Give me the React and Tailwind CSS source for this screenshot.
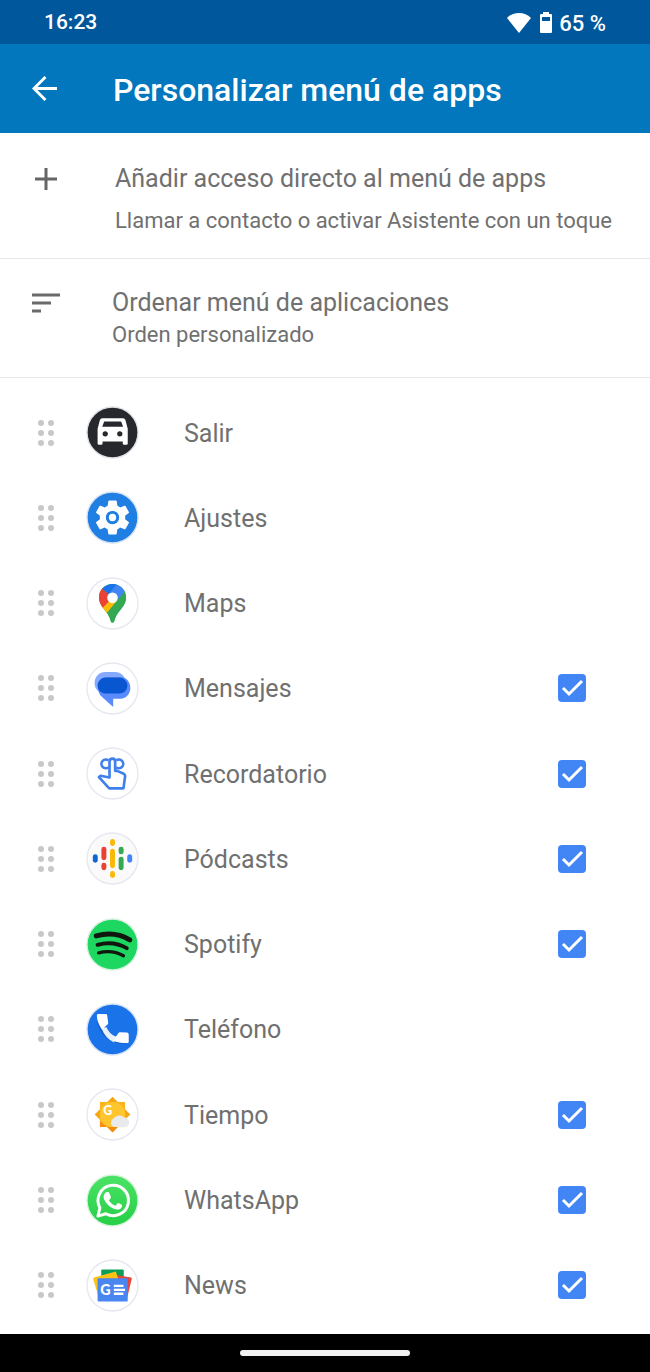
import { useState } from 'react';
import { MdSettings } from 'react-icons/md';

// Every app icon is drawn in a 160x160 box centred on 0,0
const IconCircle = ({ fill = '#ffffff', border = '#e6e7f0', children }) => (
  <svg viewBox="-80 -80 160 160" className="h-[53px] w-[53px] shrink-0" aria-hidden="true">
    <circle r="77" fill={fill} stroke={border} strokeWidth="4" />
    {children}
  </svg>
);

const ExitIcon = () => (
  <IconCircle fill="#26282d" border="#dfe1e6">
    <path
      fill="#fff"
      fillRule="evenodd"
      d="M-31 -43H32Q37 -43 39 -38L46 -11V33Q46 37 42 37H35Q31 37 31 33V27H-30V33Q-30 37 -34 37H-41Q-45 37 -45 33V-11L-38 -38Q-36 -43 -31 -43ZM-25 -33L-31 -17H32L26 -33Z"
    />
    <circle cx="-22" cy="4" r="8" fill="#26282d" />
    <circle cx="22" cy="4" r="8" fill="#26282d" />
  </IconCircle>
);

const SettingsIcon = () => (
  <IconCircle fill="#1f7fe3" border="#d5e2f3">
    <MdSettings x="-64" y="-64" size={128} color="#fff" />
    <circle r="20" fill="#1f7fe3" />
    <circle r="11" fill="#fff" />
  </IconCircle>
);

const MapsIcon = () => (
  <IconCircle>
    <clipPath id="pin">
      <path d="M0 -59C24 -59 41 -40 41 -18C41 8 18 20 9 42C5 52 5 58 0 58C-5 58 -5 52 -9 42C-18 20 -41 8 -41 -18C-41 -40 -24 -59 0 -59Z" />
    </clipPath>
    <g clipPath="url(#pin)">
      <rect x="-45" y="-62" width="90" height="125" fill="#34a853" />
      <path d="M-45 20L0 -17L15 -4L-24 43L-45 43Z" fill="#fbbc04" />
      <path d="M-45 -60L-31 -46L0 -18L-36 20L-45 20Z" fill="#ea4335" />
      <path d="M-32 -45L-32 -62H12L14 -56L-10 -28Z" fill="#1a73e8" />
      <path d="M13 -57L45 -62V-42L8 -3L-13 -27Z" fill="#4285f4" />
      <path d="M37 -36L-20 32L-10 62H45V-36Z" fill="#34a853" />
    </g>
    <circle cy="-17" r="16" fill="#fff" />
  </IconCircle>
);

const MessagesIcon = () => (
  <IconCircle>
    <rect x="-54" y="-50" width="94" height="66" rx="32" fill="#84a9ff" />
    <path d="M-18 -34H26C42 -34 54 -20 54 -2C54 17 41 31 24 31H2V56L-33 24C-49 10 -48 -34 -18 -34Z" fill="#598bff" />
    <rect x="-45" y="-33" width="90" height="48" rx="24" fill="#0957d0" />
  </IconCircle>
);

const ReminderIcon = () => (
  <IconCircle>
    <g fill="none" stroke="#4080ec" strokeWidth="8" strokeLinejoin="round">
      <path d="M-12 -19A13 13 0 1 1 -12 -39" />
      <path d="M11 -39A13 13 0 1 1 11 -19" />
      <path d="M-9 12V-36Q-9 -45 0 -45Q8 -45 8 -36V-8H14L34 1Q39 4 38 9L33 45H-10L-41 11L-36 7Z" />
    </g>
  </IconCircle>
);

const podcastBars = [
  { x: -52, y1: -5, y2: 5, color: '#0f66d0' },
  { x: -26, y1: -28, y2: -2, color: '#e94235' },
  { x: -26, y1: 20, y2: 28, color: '#e94235' },
  { x: 0, y1: -51, y2: -45, color: '#fab908' },
  { x: 0, y1: -22, y2: 22, color: '#fab908' },
  { x: 0, y1: 45, y2: 51, color: '#fab908' },
  { x: 26, y1: -28, y2: -20, color: '#34a853' },
  { x: 26, y1: 2, y2: 28, color: '#34a853' },
  { x: 52, y1: -5, y2: 5, color: '#4285f4' },
];

const PodcastsIcon = () => (
  <IconCircle fill="#fafafa">
    {podcastBars.map((b) => (
      <path
        key={`${b.x}${b.y1}`}
        d={`M${b.x} ${b.y1}V${b.y2}`}
        stroke={b.color}
        strokeWidth="15"
        strokeLinecap="round"
      />
    ))}
  </IconCircle>
);

const SpotifyIcon = () => (
  <IconCircle fill="#1ed760" border="#d6f0df">
    <g fill="none" stroke="#11170f" strokeLinecap="round">
      <path d="M-49 -26Q7 -41 52 -14" strokeWidth="15" />
      <path d="M-45 1Q3 -12 43 11" strokeWidth="12" />
      <path d="M-42 25Q0 15 33 34" strokeWidth="10" />
    </g>
  </IconCircle>
);

const PhoneIcon = () => (
  <IconCircle fill="#1a73e8" border="#d5e2f5">
    <path d="M-47 -30C-42 14 -10 44 40 44L10 34L-30 2Z" fill="#155fc4" />
    <path d="M-34 -5L-18 -7Q-10 14 11 22L5 39Q-21 29 -34 -5Z" fill="#e8f0fc" />
    <path d="M-43 -47H-20Q-17 -47 -16 -43L-13 -20Q-13 -17 -15 -15L-32 0Q-48 -24 -47 -43Q-47 -47 -43 -47Z" fill="#fff" />
    <path d="M46 41H41Q18 41 2 33L17 12Q19 8 23 8L44 9Q49 10 49 15V36Q49 41 46 41Z" fill="#fff" />
  </IconCircle>
);

const WeatherIcon = () => (
  <IconCircle>
    <rect x="-38" y="-38" width="76" height="76" transform="rotate(45)" fill="#f8a512" />
    <path d="M-38 -38H38V38H-38Z" fill="#fab51e" />
    <path d="M-38 38V20L-16 38Z" fill="#f69014" />
    <path d="M-16 38H16L0 54Z" fill="#f28b0c" />
    <circle r="38" fill="#fdc62f" />
    <text x="-28" y="1" fontFamily="Lato" fontSize="37" fontWeight="900" fill="#fff">G</text>
    <path d="M3 38A15 15 0 0 1 3 12A22 22 0 0 1 36 9A14 14 0 0 1 36 38Z" fill="#e9eaec" />
  </IconCircle>
);

const WhatsAppIcon = () => (
  <IconCircle fill="url(#whatsapp)" border="#d6f2dc">
    <linearGradient id="whatsapp" x1="0" y1="0" x2="0" y2="1">
      <stop offset="0" stopColor="#4be366" />
      <stop offset="1" stopColor="#25cf46" />
    </linearGradient>
    <path
      d="M-44 47L-38 22A46 46 0 1 1 -20 40Z"
      fill="none"
      stroke="#fff"
      strokeWidth="9"
      strokeLinejoin="round"
    />
    <path
      d="M-17 -26H-13Q-11 -26 -10 -23L-5 -11Q-4 -9 -6 -7L-11 0Q-4 11 9 16L15 9Q17 7 19 8L27 12Q30 14 29 17Q26 28 12 27C-7 24 -25 5 -27 -10Q-27 -22 -17 -26Z"
      fill="#fff"
    />
  </IconCircle>
);

const NewsIcon = () => (
  <IconCircle>
    <rect x="-34" y="-48" width="68" height="40" rx="3" fill="#0c9d58" />
    <path d="M10 -32L56 -24Q59 -23 58 -20L45 34H10Z" fill="#e5453c" />
    <path d="M-56 -24L10 -42L24 0L-42 34L-58 -18Q-59 -22 -56 -24Z" fill="#ffc317" />
    <rect x="-45" y="-22" width="91" height="70" rx="3" fill="#4a86f0" />
    <text x="-37" y="28" fontFamily="Lato" fontSize="43" fontWeight="900" fill="#fff">G</text>
    <path d="M4 1H33M4 13H38M4 25H33" stroke="#fff" strokeWidth="7" />
  </IconCircle>
);

const apps = [
  { id: 'salir', name: 'Salir', Icon: ExitIcon },
  { id: 'ajustes', name: 'Ajustes', Icon: SettingsIcon },
  { id: 'maps', name: 'Maps', Icon: MapsIcon },
  { id: 'mensajes', name: 'Mensajes', Icon: MessagesIcon, optional: true },
  { id: 'recordatorio', name: 'Recordatorio', Icon: ReminderIcon, optional: true },
  { id: 'podcasts', name: 'Pódcasts', Icon: PodcastsIcon, optional: true },
  { id: 'spotify', name: 'Spotify', Icon: SpotifyIcon, optional: true },
  { id: 'telefono', name: 'Teléfono', Icon: PhoneIcon },
  { id: 'tiempo', name: 'Tiempo', Icon: WeatherIcon, optional: true },
  { id: 'whatsapp', name: 'WhatsApp', Icon: WhatsAppIcon, optional: true },
  { id: 'news', name: 'News', Icon: NewsIcon, optional: true },
];

const StatusBar = () => (
  <div className="flex h-11 items-center justify-between bg-[#01579b] px-11 pt-0.5 font-medium text-white">
    <span className="text-[21px]">16:23</span>
    <div className="flex items-center">
      <svg viewBox="0 0 24 20" className="mr-2 h-5 w-6" fill="currentColor" aria-hidden="true">
        <path d="M12 20L0 5Q5 0 12 0T24 5Z" />
      </svg>
      <svg viewBox="0 0 14 22" className="mr-1.5 h-[22px] w-3.5" fill="currentColor" aria-hidden="true">
        <path
          fillRule="evenodd"
          d="M4 0H10V2H12Q13 2 13 3V20Q13 21 12 21H2Q1 21 1 20V3Q1 2 2 2H4ZM3 5V9H11V5Z"
        />
      </svg>
      <span className="text-[22px]">65 %</span>
    </div>
  </div>
);

const DragHandle = ({ name }) => (
  <button type="button" aria-label={`Mover ${name}`} className="cursor-grab">
    <svg viewBox="0 0 16 26" className="h-[26px] w-4" fill="#c8c8c8" aria-hidden="true">
      {[3, 13].map((x) => [3, 13, 23].map((y) => <circle key={`${x}-${y}`} cx={x} cy={y} r="3" />))}
    </svg>
  </button>
);

const AppRow = ({ app, checked, onToggle }) => (
  <li className="flex flex-1 items-center pl-[38px] pr-16">
    <DragHandle name={app.name} />
    <div className="ml-8">
      <app.Icon />
    </div>
    <label htmlFor={app.id} className="ml-[45px] flex-1 pt-0.5 text-[25px] leading-8">
      {app.name}
    </label>
    {app.optional && (
      <span className="grid">
        <input
          id={app.id}
          type="checkbox"
          checked={checked}
          onChange={onToggle}
          className="peer col-start-1 row-start-1 h-7 w-7 appearance-none rounded-sm border-2 border-gray-500 checked:border-0 checked:bg-[#4285f4]"
        />
        <svg
          viewBox="0 0 28 28"
          className="pointer-events-none invisible col-start-1 row-start-1 h-7 w-7 peer-checked:visible"
          aria-hidden="true"
        >
          <path d="M5 14L11 20L24 7" fill="none" stroke="#fff" strokeWidth="3" />
        </svg>
      </span>
    )}
  </li>
);

const App = () => {
  const [hidden, setHidden] = useState([]);

  const toggle = (id) => {
    setHidden((prev) => (prev.includes(id) ? prev.filter((h) => h !== id) : [...prev, id]));
  };

  return (
    <div className="flex min-h-screen flex-col bg-white font-['Roboto',sans-serif] text-[#707070]">
      <StatusBar />

      <header className="flex h-[89px] items-center bg-[#0277bd] pl-8 text-white">
        <button type="button" aria-label="Atrás">
          <svg viewBox="0 0 26 26" className="h-[25px] w-[25px]" fill="none" stroke="currentColor" strokeWidth="3" aria-hidden="true">
            <path d="M26 13H2M14 1L2 13L14 25" />
          </svg>
        </button>
        <h1 className="ml-14 pt-0.5 text-[32px] font-medium">Personalizar menú de apps</h1>
      </header>

      <main className="flex flex-1 flex-col">
        <button type="button" className="flex items-start border-b border-gray-200 pb-[21px] pl-[35px] pt-7 text-left">
          <svg viewBox="0 0 22 22" className="mt-[7px] h-[22px] w-[22px] shrink-0" stroke="#666" strokeWidth="3" aria-hidden="true">
            <path d="M0 11H22M11 0V22" />
          </svg>
          <span className="ml-[58px]">
            <span className="block text-[25px] leading-9">Añadir acceso directo al menú de apps</span>
            <span className="mt-2 block text-[22px] leading-8">Llamar a contacto o activar Asistente con un toque</span>
          </span>
        </button>

        <button type="button" className="flex items-start border-b border-gray-200 pb-7 pl-8 pt-[26px] text-left">
          <svg viewBox="0 0 28 20" className="mt-2 h-5 w-7 shrink-0" stroke="#6a6a6a" strokeWidth="3" aria-hidden="true">
            <path d="M0 2H28M0 10H19M0 18H9" />
          </svg>
          <span className="ml-[52px]">
            <span className="block text-[25px] leading-9">Ordenar menú de aplicaciones</span>
            <span className="block text-[22px] leading-7">Orden personalizado</span>
          </span>
        </button>

        <ul className="flex flex-1 flex-col pb-1.5 pt-3">
          {apps.map((app) => (
            <AppRow
              key={app.id}
              app={app}
              checked={!hidden.includes(app.id)}
              onToggle={() => toggle(app.id)}
            />
          ))}
        </ul>
      </main>

      <footer className="flex h-[38px] items-center justify-center bg-black">
        <div className="h-1.5 w-[170px] rounded-full bg-[#f1f1f1]" />
      </footer>
    </div>
  );
};

export default App;
